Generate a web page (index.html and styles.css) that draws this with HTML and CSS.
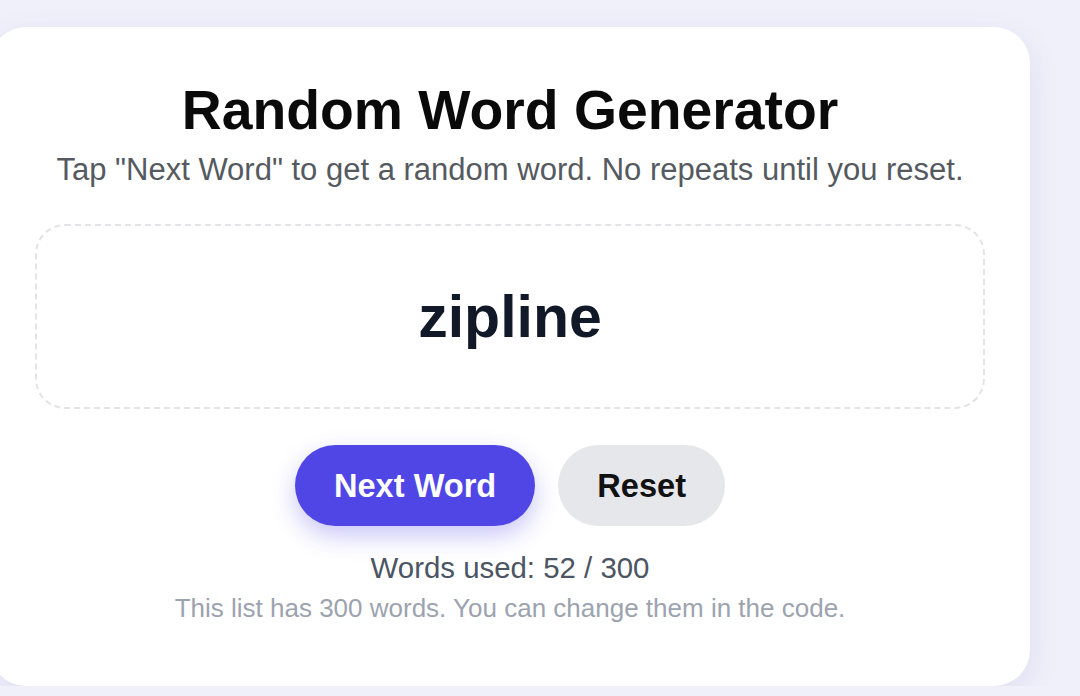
FILE: index.html
```html
<!DOCTYPE html>
<html>
<head>
    <meta charset="UTF-8">
    <title>Random Word Generator</title>
    <link rel="stylesheet" href="styles.css">
</head>
<body>
    <div class="card">
        <h1>Random Word Generator</h1>
        <p class="subtitle">Tap "Next Word" to get a random word. No repeats until you reset.</p>

        <div class="word-box">
            <span id="word" class="word">zipline</span>
        </div>

        <div class="actions">
            <button id="nextBtn" class="btn btn-primary">Next Word</button>
            <button id="resetBtn" class="btn btn-secondary">Reset</button>
        </div>

        <div class="counter" id="counter">Words used: 52 / 300</div>
        <div class="note">This list has 300 words. You can change them in the code.</div>
    </div>
</body>
</html>
```

FILE: styles.css
```css
body {
    margin: 0;
    padding: 27px 0 0;
    background: #f0f0fa;
    font-family: "Liberation Sans", Arial, sans-serif;
    overflow: hidden;
}
.card {
    width: 1040px;
    margin-left: -10px;
    box-sizing: border-box;
    padding: 52px 45px 63px;
    background: #fff;
    border-radius: 36px;
    box-shadow: 0 10px 30px rgba(90, 90, 180, 0.12);
    text-align: center;
}
h1 {
    margin: 0;
    font-size: 55.3px;
    font-weight: 700;
    color: #0a0a0a;
    line-height: 62px;
}
.subtitle {
    margin: 11px 0 0;
    font-size: 31px;
    color: #555a61;
    line-height: 36px;
}
.word-box {
    margin-top: 36px;
    height: 185px;
    box-sizing: border-box;
    border: 2px dashed #e3e4e8;
    border-radius: 30px;
    display: flex;
    align-items: center;
    justify-content: center;
}
.word {
    font-size: 59px;
    font-weight: 700;
    color: #111827;
}
.actions {
    margin-top: 36px;
    display: flex;
    justify-content: center;
    gap: 23px;
}
.btn {
    height: 81px;
    padding: 0 39px;
    border: none;
    border-radius: 41px;
    font-family: inherit;
    font-size: 32.6px;
    font-weight: 700;
    cursor: pointer;
}
.btn-primary {
    background: #4f46e5;
    color: #fff;
    box-shadow: 0 10px 24px rgba(79, 70, 229, 0.3);
}
.btn-secondary {
    background: #e5e7eb;
    color: #111;
}
.counter {
    margin-top: 25px;
    font-size: 29.4px;
    color: #4b5563;
    line-height: 34px;
}
.note {
    margin-top: 8px;
    font-size: 26px;
    color: #9ca3af;
    line-height: 30px;
}
```
